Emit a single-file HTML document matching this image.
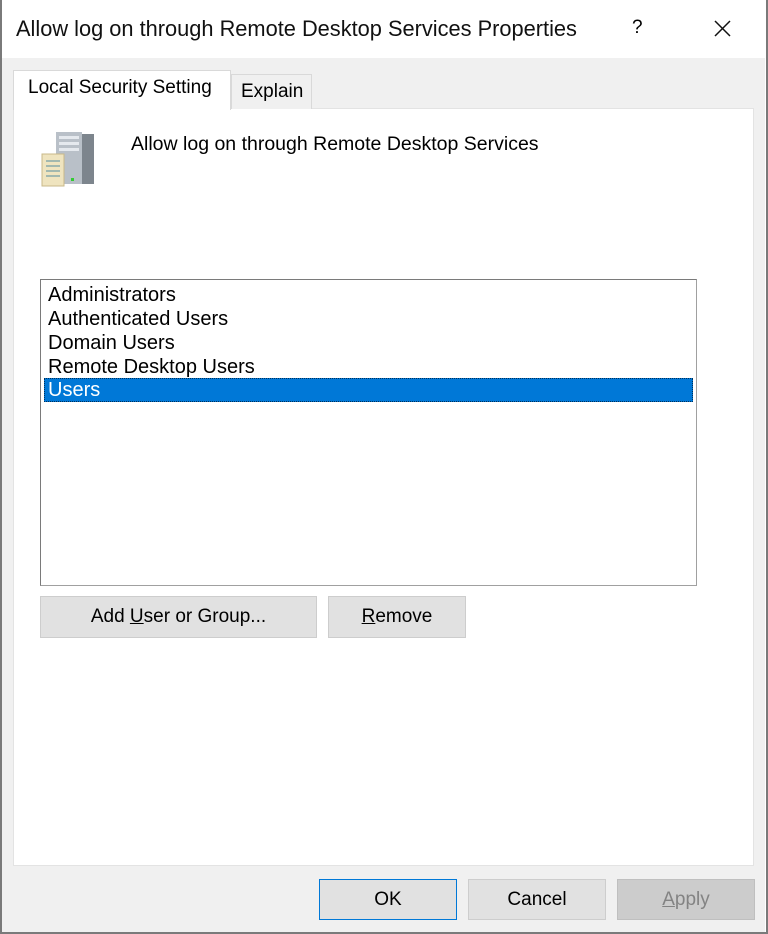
<!DOCTYPE html>
<html><head><style>
*{margin:0;padding:0;box-sizing:border-box}
body{width:768px;height:934px;background:#fff;font-family:"Liberation Sans",sans-serif;color:#000;position:relative;overflow:hidden}
.abs{position:absolute}
.win{left:0;top:0;width:768px;height:934px;border:1px solid #8a8a8a;border-width:0 2px 2px 2px;border-color:#7a7a7a}
.body{left:2px;top:58px;width:763px;height:874px;background:#f0f0f0}
.btn{position:absolute;background:#e1e1e1;border:1px solid #cdcdcd;font-size:19px;text-align:center;line-height:39px}
</style></head><body>
<div class="abs win"></div>
<div class="abs" style="left:16px;top:16px;font-size:21.8px;color:#111">Allow log on through Remote Desktop Services Properties</div>
<div class="abs" style="left:632px;top:17px;font-size:19px">?</div>
<svg class="abs" style="left:714px;top:20px" width="17" height="17"><path d="M1 1L16 16M16 1L1 16" stroke="#111" stroke-width="1.5"/></svg>
<div class="abs body"></div>
<div class="abs" style="left:13px;top:108px;width:741px;height:758px;background:#fff;border:1px solid #e3e3e3"></div>
<div class="abs" style="left:231px;top:74px;width:81px;height:35px;background:#f0f0f0;border:1px solid #d9d9d9;border-bottom:none;font-size:19px;padding:6px 0 0 9px">Explain</div>
<div class="abs" style="left:13px;top:70px;width:218px;height:40px;background:#fff;border:1px solid #d9d9d9;border-bottom:none;font-size:19px;padding:6px 0 0 14px">Local Security Setting</div>
<svg class="abs" style="left:38px;top:130px" width="58" height="60">
<rect x="18" y="2" width="26" height="52" fill="#b9c0c8"/>
<rect x="44" y="4" width="12" height="50" fill="#7d858d"/>
<rect x="21" y="6" width="20" height="3" fill="#e5e9ee"/>
<rect x="21" y="12" width="20" height="3" fill="#e5e9ee"/>
<rect x="21" y="18" width="20" height="3" fill="#e5e9ee"/>
<rect x="33" y="48" width="3" height="3" fill="#3c3"/>
<rect x="4" y="24" width="22" height="32" fill="#efe4bf" stroke="#c8b98a"/>
<path d="M8 31h14M8 36h14M8 41h14M8 46h14" stroke="#8aa" stroke-width="1.5"/>
</svg>
<div class="abs" style="left:131px;top:133px;font-size:19.5px">Allow log on through Remote Desktop Services</div>
<div class="abs" style="left:40px;top:279px;width:657px;height:307px;background:#fff;border:1px solid #828790;border-color:#7a7a7a #a0a0a0 #a0a0a0 #7a7a7a"></div>
<div class="abs" style="left:48px;top:283px;font-size:20px;line-height:24px">Administrators<br>Authenticated Users<br>Domain Users<br>Remote Desktop Users</div>
<div class="abs" style="left:44px;top:378px;width:649px;height:24px;background:#0078d7;color:#fff;font-size:20px;line-height:23px;padding-left:3px;border:1px dotted #00305a">Users</div>
<div class="btn" style="left:40px;top:596px;width:277px;height:42px">Add <u>U</u>ser or Group...</div>
<div class="btn" style="left:328px;top:596px;width:138px;height:42px"><u>R</u>emove</div>
<div class="btn" style="left:319px;top:879px;width:138px;height:41px;border:1px solid #0078d7">OK</div>
<div class="btn" style="left:468px;top:879px;width:138px;height:41px">Cancel</div>
<div class="btn" style="left:617px;top:879px;width:138px;height:41px;background:#cccccc;border-color:#bfbfbf;color:#838383"><u>A</u>pply</div>
</body></html>
